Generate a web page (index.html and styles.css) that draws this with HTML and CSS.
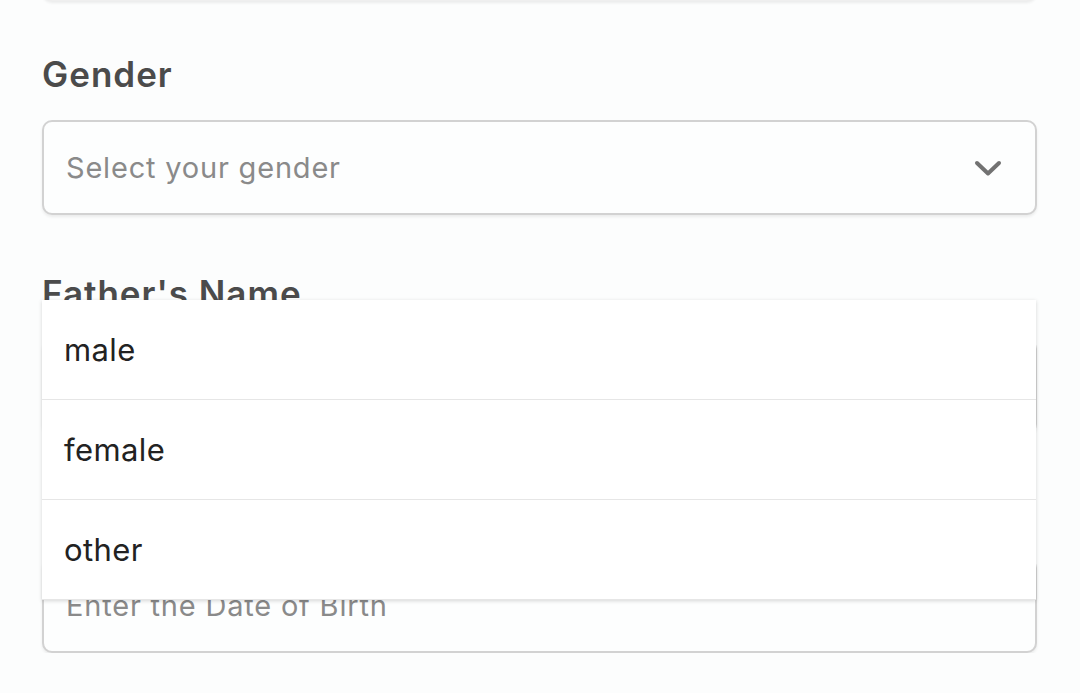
FILE: index.html
```html
<!DOCTYPE html>
<html lang="en">
<head>
<meta charset="utf-8">
<title>Form</title>
<link rel="stylesheet" href="styles.css">
</head>
<body>
<div class="form">
  <div class="field field-prev">
    <div class="input input-prev"></div>
  </div>

  <div class="field field-first">
    <label class="label">Gender</label>
    <div class="select-wrap">
      <div class="input select">
        <span class="placeholder">Select your gender</span>
        <svg class="chevron" width="28" height="17" viewBox="0 0 28 17" aria-hidden="true">
          <path d="M3 3 L14 13.5 L25 3" fill="none" stroke="#727272" stroke-width="4" stroke-linecap="round" stroke-linejoin="round"/>
        </svg>
      </div>
      <ul class="menu">
        <li class="menu-item">male</li>
        <li class="menu-item">female</li>
        <li class="menu-item">other</li>
      </ul>
    </div>
  </div>

  <div class="field">
    <label class="label">Father's Name</label>
    <div class="input"><span class="placeholder">Enter the Father's Name</span></div>
  </div>

  <div class="field">
    <label class="label">Date of Birth</label>
    <div class="input"><span class="placeholder">Enter the Date of Birth</span></div>
  </div>
</div>
</body>
</html>
```

FILE: styles.css
```css
html, body {
  margin: 0;
  padding: 0;
  background: #fcfdfd;
  font-family: Inter, "Noto Sans", sans-serif;
  overflow: hidden;
}

.form {
  display: flex;
  flex-direction: column;
  padding: 0 43px 0 42px;
}

.field {
  display: flex;
  flex-direction: column;
  gap: 26px;
  margin-top: 58px;
}

.field-prev {
  margin-top: 0;
}

.field-first {
  margin-top: 53px;
}

.label {
  display: block;
  font-size: 35px;
  line-height: 40px;
  font-weight: 600;
  letter-spacing: 1px;
  color: #4b4b4b;
}

.input {
  box-sizing: border-box;
  height: 95px;
  border: 2px solid #d2d2d2;
  border-radius: 10px;
  background: #fdfefe;
  box-shadow: 0 2px 3px rgba(0, 0, 0, 0.07);
  display: flex;
  align-items: center;
  padding: 0 33px 0 22px;
}

.input-prev {
  margin-top: -94px;
  border-color: #efefef;
}

.placeholder {
  font-size: 29px;
  letter-spacing: 0.8px;
  color: #8a8a8a;
  flex: 1;
}

.select-wrap {
  position: relative;
}

.chevron {
  display: block;
  flex: none;
  margin-top: 2px;
}

.menu {
  position: absolute;
  top: calc(100% + 85px);
  left: 0;
  right: 1px;
  margin: 0;
  padding: 0;
  list-style: none;
  background: #ffffff;
  box-shadow: 0 1px 4px rgba(0, 0, 0, 0.16);
  z-index: 2;
}

.menu-item {
  box-sizing: border-box;
  height: 100px;
  display: flex;
  align-items: center;
  padding-left: 22px;
  font-size: 31px;
  letter-spacing: 0.4px;
  color: #222222;
  border-bottom: 1.5px solid #e6e6e6;
}
```
